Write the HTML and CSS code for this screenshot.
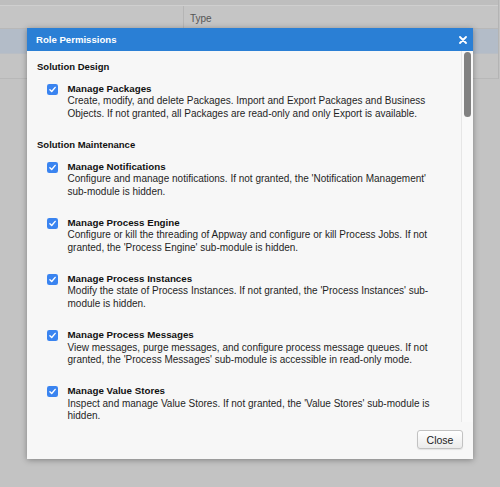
FILE: index.html
```html
<!DOCTYPE html>
<html>
<head>
<meta charset="utf-8">
<link rel="stylesheet" href="styles.css">
</head>
<body>
<div class="app">
  <div class="topbar"></div>
  <div class="thead">
    <div class="col col-name"></div>
    <div class="col col-type">Type</div>
  </div>
  <div class="trow selected"></div>
  <div class="trow"></div>
</div>

<div class="dialog">
  <div class="dlg-head">
    <span class="dlg-title">Role Permissions</span>
    <svg class="dlg-x" width="8" height="8" viewBox="0 0 8 8"><path d="M1 1L7 7M7 1L1 7" stroke="#fff" stroke-width="1.8" stroke-linecap="round"/></svg>
  </div>
  <div class="dlg-body">
    <div class="content">
      <div class="section">
        <div class="sec-title">Solution Design</div>
        <div class="item">
          <svg class="cb" width="11" height="11" viewBox="0 0 11 11"><rect x="0" y="0" width="11" height="11" rx="2.2" fill="#3a84f0"/><path d="M2.9 5.7L4.7 7.5L8.2 3.4" fill="none" stroke="#fff" stroke-width="1.4" stroke-linecap="round" stroke-linejoin="round"/></svg>
          <div class="item-text">
            <div class="item-title">Manage Packages</div>
            <div class="item-desc">Create, modify, and delete Packages. Import and Export Packages and Business Objects. If not granted, all Packages are read-only and only Export is available.</div>
          </div>
        </div>
      </div>
      <div class="section">
        <div class="sec-title">Solution Maintenance</div>
        <div class="item">
          <svg class="cb" width="11" height="11" viewBox="0 0 11 11"><rect x="0" y="0" width="11" height="11" rx="2.2" fill="#3a84f0"/><path d="M2.9 5.7L4.7 7.5L8.2 3.4" fill="none" stroke="#fff" stroke-width="1.4" stroke-linecap="round" stroke-linejoin="round"/></svg>
          <div class="item-text">
            <div class="item-title">Manage Notifications</div>
            <div class="item-desc">Configure and manage notifications. If not granted, the 'Notification Management' sub-module is hidden.</div>
          </div>
        </div>
        <div class="item">
          <svg class="cb" width="11" height="11" viewBox="0 0 11 11"><rect x="0" y="0" width="11" height="11" rx="2.2" fill="#3a84f0"/><path d="M2.9 5.7L4.7 7.5L8.2 3.4" fill="none" stroke="#fff" stroke-width="1.4" stroke-linecap="round" stroke-linejoin="round"/></svg>
          <div class="item-text">
            <div class="item-title">Manage Process Engine</div>
            <div class="item-desc">Configure or kill the threading of Appway and configure or kill Process Jobs. If not granted, the 'Process Engine' sub-module is hidden.</div>
          </div>
        </div>
        <div class="item">
          <svg class="cb" width="11" height="11" viewBox="0 0 11 11"><rect x="0" y="0" width="11" height="11" rx="2.2" fill="#3a84f0"/><path d="M2.9 5.7L4.7 7.5L8.2 3.4" fill="none" stroke="#fff" stroke-width="1.4" stroke-linecap="round" stroke-linejoin="round"/></svg>
          <div class="item-text">
            <div class="item-title">Manage Process Instances</div>
            <div class="item-desc">Modify the state of Process Instances. If not granted, the 'Process Instances' sub-module is hidden.</div>
          </div>
        </div>
        <div class="item">
          <svg class="cb" width="11" height="11" viewBox="0 0 11 11"><rect x="0" y="0" width="11" height="11" rx="2.2" fill="#3a84f0"/><path d="M2.9 5.7L4.7 7.5L8.2 3.4" fill="none" stroke="#fff" stroke-width="1.4" stroke-linecap="round" stroke-linejoin="round"/></svg>
          <div class="item-text">
            <div class="item-title">Manage Process Messages</div>
            <div class="item-desc">View messages, purge messages, and configure process message queues. If not granted, the 'Process Messages' sub-module is accessible in read-only mode.</div>
          </div>
        </div>
        <div class="item">
          <svg class="cb" width="11" height="11" viewBox="0 0 11 11"><rect x="0" y="0" width="11" height="11" rx="2.2" fill="#3a84f0"/><path d="M2.9 5.7L4.7 7.5L8.2 3.4" fill="none" stroke="#fff" stroke-width="1.4" stroke-linecap="round" stroke-linejoin="round"/></svg>
          <div class="item-text">
            <div class="item-title">Manage Value Stores</div>
            <div class="item-desc">Inspect and manage Value Stores. If not granted, the 'Value Stores' sub-module is hidden.</div>
          </div>
        </div>
      </div>
    </div>
    <div class="scrollbar"><div class="thumb"></div></div>
  </div>
  <div class="dlg-foot">
    <button class="btn">Close</button>
  </div>
</div>
</body>
</html>
```

FILE: styles.css
```css
html, body {
  margin: 0;
  padding: 0;
}
body {
  width: 500px;
  height: 487px;
  background: #c3c3c3;
  font-family: "Liberation Sans", Arial, sans-serif;
  position: relative;
  overflow: hidden;
}
.app {
  border-right: 1px solid #b4b4b4;
  width: 498px;
}
.topbar {
  height: 5px;
  background: #bebebe;
  border-bottom: 1px solid #cfcfcf;
}
.thead {
  display: flex;
  height: 22px;
  background: #c5c5c5;
  border-bottom: 1px solid #b8b8b8;
}
.col {
  display: flex;
  align-items: center;
}
.col-name {
  width: 183px;
  border-right: 1px solid #b5b5b5;
}
.col-type {
  padding-left: 6px;
  padding-top: 2px;
  font-size: 10px;
  color: #555;
}
.trow {
  height: 24px;
  background: #c4c4c4;
  border-bottom: 1px solid #b8b8b8;
}
.trow.selected {
  background: #b3bcc8;
  border-bottom: 1px solid #b9bec5;
}

.dialog {
  position: absolute;
  left: 27px;
  top: 28px;
  width: 446px;
  height: 431px;
  background: #f7f7f7;
  box-shadow: 0 1px 6px rgba(0, 0, 0, 0.35);
  display: flex;
  flex-direction: column;
}
.dlg-head {
  height: 23px;
  flex: none;
  background: #2a7fd5;
  display: flex;
  align-items: center;
  justify-content: space-between;
  padding: 0 6px 0 9px;
}
.dlg-title {
  color: #fff;
  font-weight: bold;
  font-size: 9.6px;
}
.dlg-x {
  display: block;
}
.dlg-body {
  flex: 1;
  display: flex;
  min-height: 0;
}
.content {
  flex: 1;
  overflow: hidden;
  padding: 10px 18px 0 10px;
  color: #1e1e1e;
}
.section {
  margin-bottom: 12px;
}
.sec-title {
  font-weight: bold;
  font-size: 9.5px;
  line-height: 12.7px;
  color: #111;
  margin-bottom: 9px;
}
.item {
  display: flex;
  align-items: flex-start;
  margin-left: 10px;
  margin-bottom: 18px;
}
.cb {
  flex: none;
  margin-top: 1px;
  margin-right: 9.5px;
  display: block;
}
.item-text {
  flex: 1;
}
.item-title {
  font-weight: bold;
  font-size: 9.75px;
  line-height: 12.7px;
  color: #111;
}
.item-desc {
  font-size: 10px;
  line-height: 12.7px;
  color: #1f1f1f;
}
.scrollbar {
  flex: none;
  width: 12px;
  border-left: 1px solid #e6e6e6;
  background: #f9f9f9;
  padding: 1px 2px 0 2px;
  box-sizing: border-box;
}
.thumb {
  height: 65px;
  width: 7px;
  border-radius: 4px;
  background: #818181;
}
.dlg-foot {
  flex: none;
  height: 37px;
  display: flex;
  justify-content: flex-end;
  align-items: flex-start;
  padding: 8px 10px 0 0;
  box-sizing: border-box;
}
.btn {
  width: 46px;
  height: 19px;
  border: 1px solid #c2c2c2;
  border-radius: 3px;
  background: linear-gradient(#ffffff, #ebebeb);
  font-family: "Liberation Sans", Arial, sans-serif;
  font-size: 10.5px;
  color: #222;
  padding: 0;
  box-shadow: 0 1px 1px rgba(0,0,0,0.08);
}
```
